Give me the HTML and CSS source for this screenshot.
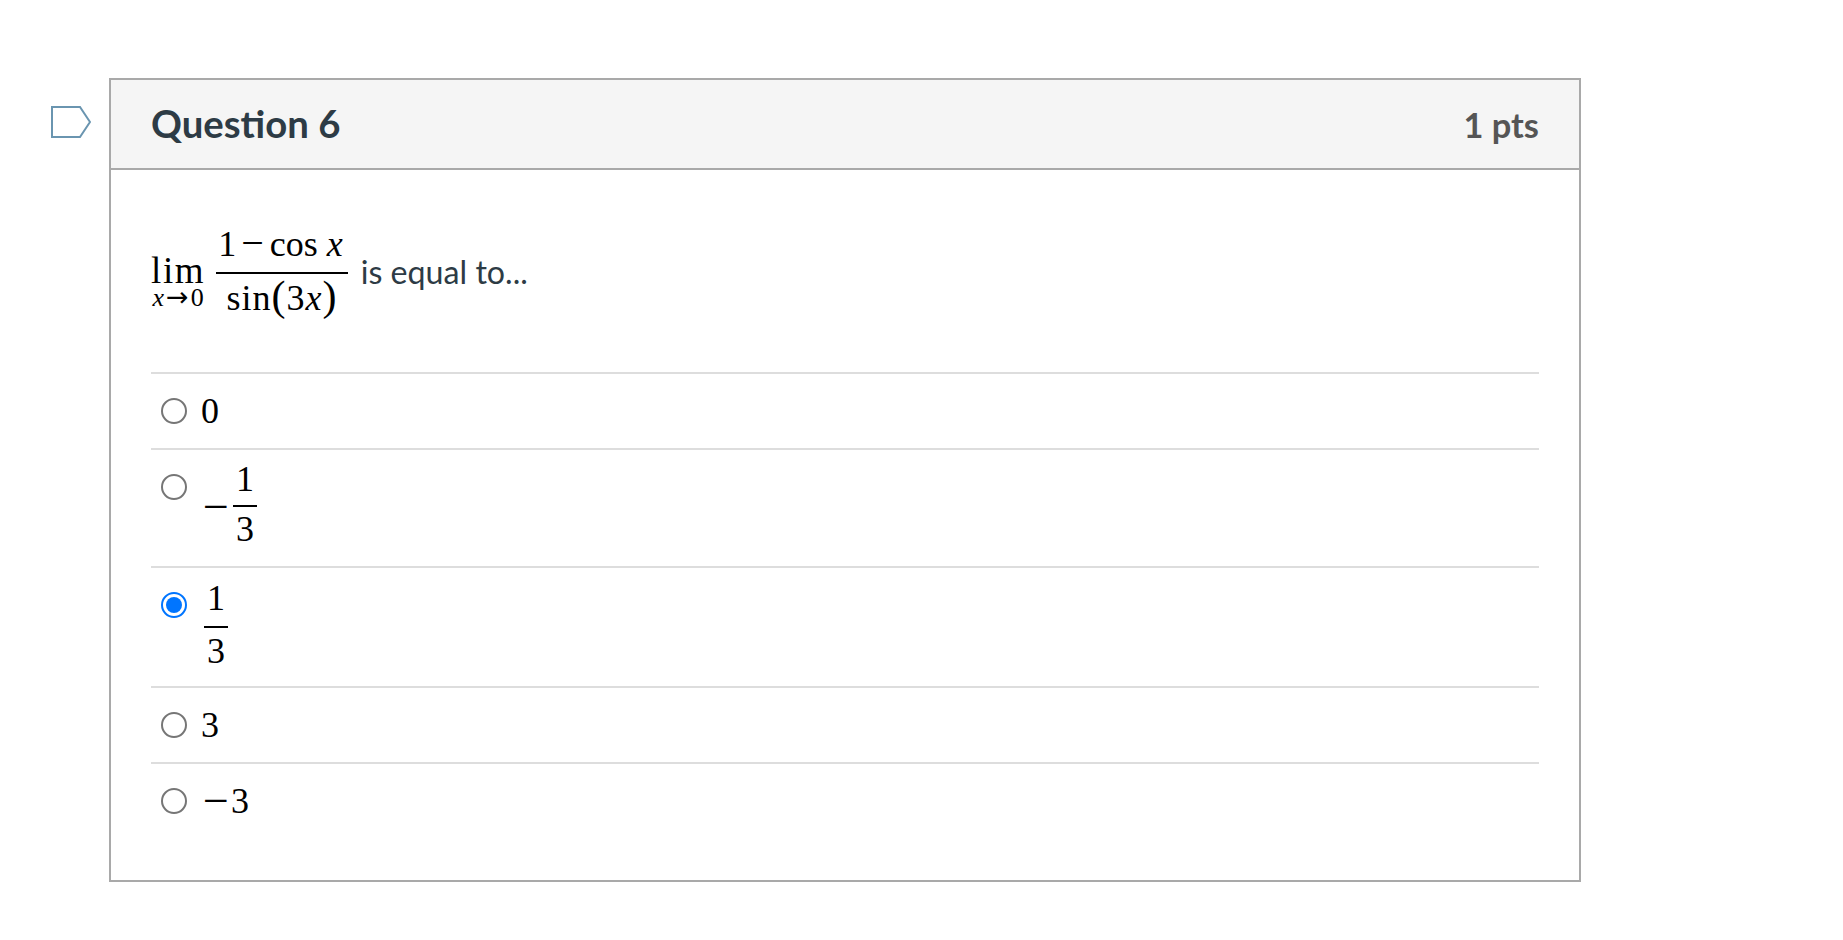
FILE: index.html
```html
<!DOCTYPE html>
<html lang="en">
<head>
    <meta charset="UTF-8">
    <meta name="viewport" content="width=device-width, initial-scale=1.0">
    <title>Question 6</title>
    <link rel="stylesheet" href="styles.css">
</head>
<body>
    <div class="page">
        <svg class="flag" width="40" height="32" viewBox="0 0 40 32" aria-hidden="true">
            <path d="M1 1H29L39 16L29 31H1Z" fill="#fff" stroke="#6a95b0" stroke-width="2"/>
        </svg>

        <div class="question">
            <div class="question-header">
                <h2>Question 6</h2>
                <span class="points">1 pts</span>
            </div>

            <div class="question-body">
                <div class="prompt">
                    <span class="limit">
                        <span class="lim">lim</span>
                        <span class="lim-sub"><i>x</i><span class="arrow">→</span>0</span>
                    </span>
                    <span class="frac wide">
                        <span class="num">1<span class="op">−</span>cos <i>x</i></span>
                        <span class="den">sin<span class="paren">(</span>3<i>x</i><span class="paren">)</span></span>
                    </span>
                    <span class="prompt-text">is equal to...</span>
                </div>

                <div class="answers">
                    <label class="answer">
                        <input type="radio" name="q6">
                        <span class="math">0</span>
                    </label>
                    <label class="answer">
                        <input type="radio" name="q6">
                        <span class="math neg"><span class="minus over">−</span>
                            <span class="frac"><span class="num">1</span><span class="den">3</span></span>
                        </span>
                    </label>
                    <label class="answer tall">
                        <input type="radio" name="q6" checked>
                        <span class="math">
                            <span class="frac"><span class="num">1</span><span class="den">3</span></span>
                        </span>
                    </label>
                    <label class="answer">
                        <input type="radio" name="q6">
                        <span class="math">3</span>
                    </label>
                    <label class="answer">
                        <input type="radio" name="q6">
                        <span class="math neg"><span class="minus">−</span>3</span>
                    </label>
                </div>
            </div>
        </div>
    </div>
</body>
</html>
```

FILE: styles.css
```css
* {
    margin: 0;
    padding: 0;
    box-sizing: border-box;
}

body {
    background: #fff;
    font-family: 'Lato', 'Liberation Sans', sans-serif;
    color: #2d3b45;
}

.page {
    display: flex;
    align-items: flex-start;
    gap: 18px;
    padding: 78px 0 0 51px;
}

.flag {
    flex: none;
    margin-top: 28px;
}

.question {
    width: 1472px;
    height: 804px;
    border: 2px solid #a9a9a9;
}

.question-header {
    display: flex;
    align-items: center;
    justify-content: space-between;
    height: 90px;
    padding: 0 40px;
    background: #f5f5f5;
    border-bottom: 2px solid #a9a9a9;
}

h2 {
    font-size: 38.3px;
    font-weight: 700;
    margin-bottom: 2px;
}

.points {
    font-size: 34.4px;
    font-weight: 700;
    color: #555;
}

.question-body {
    padding: 47px 40px 0;
}

.prompt {
    display: flex;
    align-items: center;
    height: 109px;
    margin-bottom: 46px;
}

.limit {
    display: flex;
    flex-direction: column;
    align-items: center;
    margin: 21px 11px 0 0;
    font-family: 'Liberation Serif', serif;
    color: #000;
}

.lim {
    font-size: 37px;
    line-height: 31px;
    letter-spacing: 1.6px;
}

.lim-sub {
    font-size: 26px;
    line-height: 23px;
    white-space: nowrap;
}

.arrow {
    margin: 0 2px;
    font-family: 'DejaVu Sans', sans-serif;
    font-size: 27px;
    line-height: 0;
}

.frac {
    display: inline-flex;
    flex-direction: column;
    align-items: center;
    font-family: 'Liberation Serif', serif;
    font-size: 36px;
    color: #000;
}

.frac .num {
    padding: 0 3px 6px;
    line-height: 40px;
    border-bottom: 2px solid #000;
}

.frac .den {
    padding-top: 2px;
    line-height: 40px;
}

.frac.wide {
    margin-right: 13px;
}

.frac.wide .num {
    padding: 0 5px 6px 2px;
    line-height: 44px;
    white-space: nowrap;
}

.frac.wide .den {
    padding-top: 1px;
    line-height: 47px;
    letter-spacing: 1px;
    white-space: nowrap;
}

.op {
    margin: 0 6px 0 5px;
    font-size: 40px;
    line-height: 0;
}

.paren {
    font-size: 42px;
    line-height: 0;
}

.prompt-text {
    font-size: 32.2px;
}

.answer {
    display: flex;
    align-items: flex-start;
    min-height: 76px;
    padding: 24px 0 0 10px;
    border-top: 2px solid #ddd;
}

.answer input {
    appearance: none;
    flex: none;
    width: 26px;
    height: 26px;
    background: #fff;
    border: 2px solid #767676;
    border-radius: 50%;
}

.answer input:checked {
    padding: 3px;
    border: 2px solid #0075ff;
    background: #0075ff content-box;
}

.math {
    display: flex;
    align-items: flex-start;
    margin-left: 14px;
    font-family: 'Liberation Serif', serif;
    font-size: 36px;
    line-height: 26px;
    color: #000;
}

.minus {
    flex: none;
    width: 30px;
    font-size: 46px;
    line-height: 26px;
    text-align: center;
}

.minus.over {
    margin-top: 20px;
}

.math .frac {
    margin-top: -15px;
    margin-bottom: 17px;
}

.neg .frac {
    margin-left: 2px;
}

.tall .math {
    margin-left: 17px;
}

.tall .frac {
    margin-top: -14px;
    margin-bottom: 15px;
}

.tall .frac .num {
    padding-bottom: 8px;
}

.tall .frac .den {
    padding-top: 3px;
}
```
